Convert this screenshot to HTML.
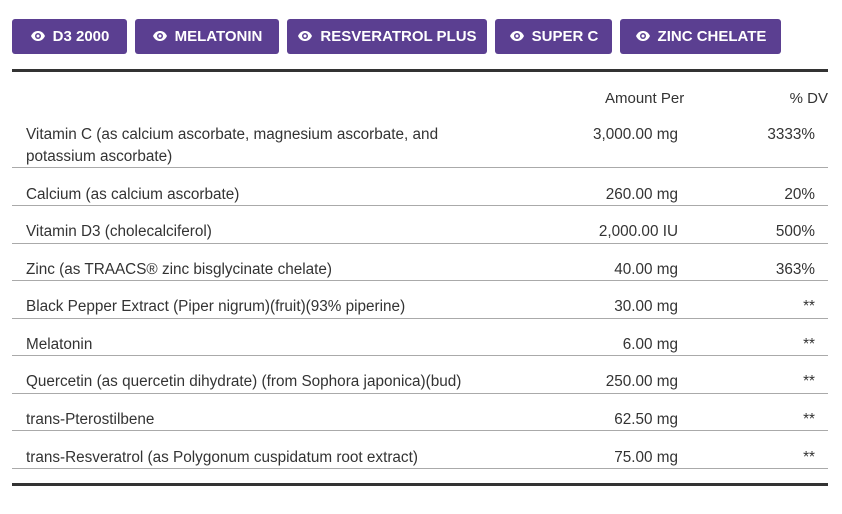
<!DOCTYPE html>
<html><head><style>
body{margin:0;background:#fff;font-family:"Liberation Sans",sans-serif;color:#333;width:842px;height:514px;position:relative;overflow:hidden}
.btn{position:absolute;top:19px;height:35px;background:#5b3f91;border-radius:3px;color:#fff;font-weight:bold;font-size:15px;line-height:36px;box-sizing:border-box;text-align:center;white-space:nowrap}
.btn svg{vertical-align:-1px;margin-right:7px}
.rule{position:absolute;left:12px;width:816px;height:3px;background:#333}
.row{position:absolute;left:12px;width:816px;border-bottom:1px solid #aaa;font-size:15.3px}
.n,.a,.d{position:absolute;line-height:22px;margin-top:2px}
.n{left:14px}
.a{right:150px}
.d{right:13px}
.h{position:absolute;font-size:15px;top:90px}
</style></head><body>
<div class="btn" style="left:12px;width:115px"><svg width="16" height="12" viewBox="0 0 16 12"><path d="M1 6C3 2 5.5 1 8 1s5 1 7 5c-2 4-4.5 5-7 5S3 10 1 6z" fill="#fff"/><circle cx="8" cy="6" r="3" fill="#5b3f91"/><circle cx="8" cy="6" r="1.5" fill="#fff"/></svg>D3 2000</div>
<div class="btn" style="left:135px;width:144px"><svg width="16" height="12" viewBox="0 0 16 12"><path d="M1 6C3 2 5.5 1 8 1s5 1 7 5c-2 4-4.5 5-7 5S3 10 1 6z" fill="#fff"/><circle cx="8" cy="6" r="3" fill="#5b3f91"/><circle cx="8" cy="6" r="1.5" fill="#fff"/></svg>MELATONIN</div>
<div class="btn" style="left:287px;width:200px"><svg width="16" height="12" viewBox="0 0 16 12"><path d="M1 6C3 2 5.5 1 8 1s5 1 7 5c-2 4-4.5 5-7 5S3 10 1 6z" fill="#fff"/><circle cx="8" cy="6" r="3" fill="#5b3f91"/><circle cx="8" cy="6" r="1.5" fill="#fff"/></svg>RESVERATROL PLUS</div>
<div class="btn" style="left:495px;width:117px"><svg width="16" height="12" viewBox="0 0 16 12"><path d="M1 6C3 2 5.5 1 8 1s5 1 7 5c-2 4-4.5 5-7 5S3 10 1 6z" fill="#fff"/><circle cx="8" cy="6" r="3" fill="#5b3f91"/><circle cx="8" cy="6" r="1.5" fill="#fff"/></svg>SUPER C</div>
<div class="btn" style="left:620px;width:161px"><svg width="16" height="12" viewBox="0 0 16 12"><path d="M1 6C3 2 5.5 1 8 1s5 1 7 5c-2 4-4.5 5-7 5S3 10 1 6z" fill="#fff"/><circle cx="8" cy="6" r="3" fill="#5b3f91"/><circle cx="8" cy="6" r="1.5" fill="#fff"/></svg>ZINC CHELATE</div>
<div class="rule" style="top:69px"></div>
<div class="h" style="left:605px">Amount Per</div>
<div class="h" style="right:14px">% DV</div>
<div class="row" style="top:122px;height:45px"><div class="n" style="top:0">Vitamin C (as calcium ascorbate, magnesium ascorbate, and<br>potassium ascorbate)</div><div class="a" style="top:0">3,000.00 mg</div><div class="d" style="top:0">3333%</div></div>
<div class="row" style="top:168px;height:37px"><div class="n" style="top:14px">Calcium (as calcium ascorbate)</div><div class="a" style="top:14px">260.00 mg</div><div class="d" style="top:14px">20%</div></div>
<div class="row" style="top:206px;height:37px"><div class="n" style="top:13px">Vitamin D3 (cholecalciferol)</div><div class="a" style="top:13px">2,000.00 IU</div><div class="d" style="top:13px">500%</div></div>
<div class="row" style="top:244px;height:36px"><div class="n" style="top:13px">Zinc (as TRAACS® zinc bisglycinate chelate)</div><div class="a" style="top:13px">40.00 mg</div><div class="d" style="top:13px">363%</div></div>
<div class="row" style="top:281px;height:37px"><div class="n" style="top:13px">Black Pepper Extract (Piper nigrum)(fruit)(93% piperine)</div><div class="a" style="top:13px">30.00 mg</div><div class="d" style="top:13px">**</div></div>
<div class="row" style="top:319px;height:36px"><div class="n" style="top:13px">Melatonin</div><div class="a" style="top:13px">6.00 mg</div><div class="d" style="top:13px">**</div></div>
<div class="row" style="top:356px;height:37px"><div class="n" style="top:13px">Quercetin (as quercetin dihydrate) (from Sophora japonica)(bud)</div><div class="a" style="top:13px">250.00 mg</div><div class="d" style="top:13px">**</div></div>
<div class="row" style="top:394px;height:36px"><div class="n" style="top:13px">trans-Pterostilbene</div><div class="a" style="top:13px">62.50 mg</div><div class="d" style="top:13px">**</div></div>
<div class="row" style="top:431px;height:37px"><div class="n" style="top:14px">trans-Resveratrol (as Polygonum cuspidatum root extract)</div><div class="a" style="top:14px">75.00 mg</div><div class="d" style="top:14px">**</div></div>
<div class="rule" style="top:483px"></div>
</body></html>
